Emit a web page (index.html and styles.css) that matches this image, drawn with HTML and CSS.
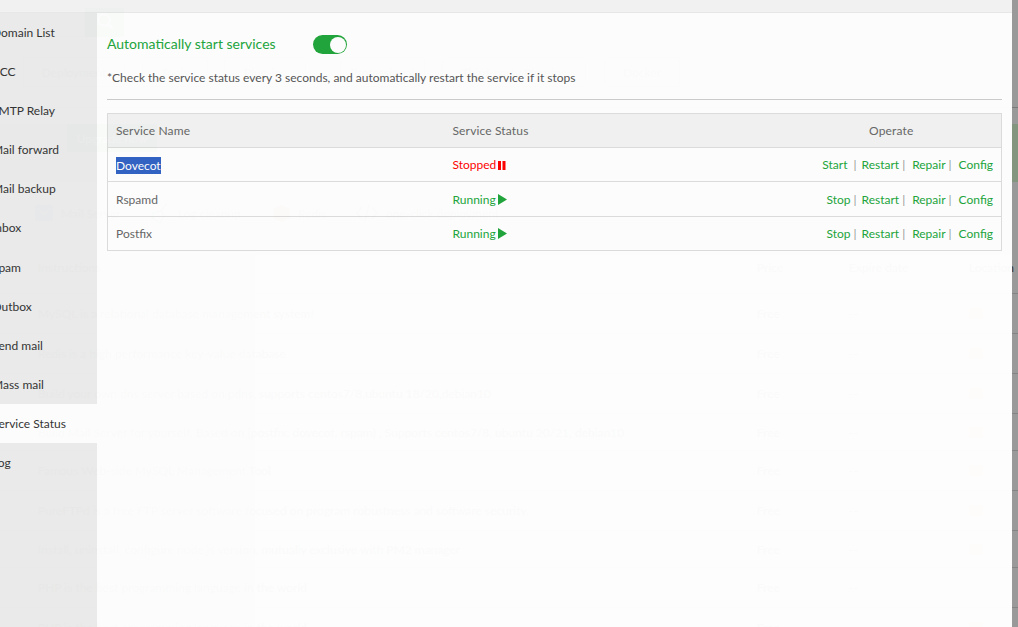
FILE: index.html
```html
<!DOCTYPE html>
<html lang="en">
<head>
<meta charset="utf-8">
<title>Service Status</title>
<link rel="stylesheet" href="styles.css">
</head>
<body>
<div class="page">
  <div class="search">
    <div class="search-box"></div>
    <div class="search-btn">
      <svg width="18" height="18" viewBox="0 0 18 18" fill="none" stroke="#fff" stroke-width="1.6"><circle cx="8" cy="8" r="5.6"/><path d="M12 12l5 5"/></svg>
    </div>
  </div>
  <nav class="tabs">
    <span class="tab tab-deploy">Deployment</span>
    <span class="tab tab-tools">Tools</span>
    <span class="tab tab-plug">Plug-ins</span>
    <span class="tab tab-pro">Professional</span>
    <span class="tab tab-third">Third-party Plug-ins</span>
    <span class="tab tab-docker">Docker</span>
  </nav>
  <div class="banner"><span class="upgrade">Upgrade now</span></div>
  <div class="quick">
    <span class="quick-item q-mail">
      <svg width="18" height="16" viewBox="0 0 18 16"><rect width="18" height="16" rx="2" fill="#3b8fe0"/><path d="M2 3l7 6 7-6" fill="none" stroke="#fff" stroke-width="1.4"/></svg>
      Mail Server
    </span>
    <span class="quick-item q-log">
      <svg width="20" height="22" viewBox="0 0 20 22" fill="none" stroke="#20a53a" stroke-width="1.6"><path d="M17 1l-6 8M3 11l8-2 3 5-4 7-8-5z"/></svg>
      Log cleanup
    </span>
    <span class="quick-item q-redis">
      <svg width="17" height="17" viewBox="0 0 17 17"><path d="M8.500 0l8 3.500v10l-8 3.500-8-3.500v-10z" fill="#d8382c"/></svg>
      Redis
    </span>
    <span class="quick-item q-code">
      <svg width="22" height="18" viewBox="0 0 22 18" fill="none" stroke="#555" stroke-width="1.5"><path d="M6 3L1 9l5 6M16 3l5 6-5 6M13 1L9 17"/></svg>
      one-click deployment
    </span>
  </div>
  <div class="soft-head">
    <span>Instructions</span><span>Price</span><span>Expire date</span><span>Location</span>
  </div>
  <div class="soft-row"><span>MySQL is a relational database management system!</span><span>Free</span><span>--</span><i class="folder"></i></div>
  <div class="soft-row"><span>Redis is a high performance key-value database</span><span>Free</span><span>--</span><i class="folder"></i></div>
  <div class="soft-row"><span>Build your own dns server based on pdns, supports centos7/8,ubuntu 18/20,debian10</span><span>Free</span><span>--</span><i class="folder"></i></div>
  <div class="soft-row soft-row-short"><span>Build Mail Server for yourself, Based on [postfix, dovecot, rspam] , Supports centos7/8, ubuntu 20/21, debian10</span><span>Free</span><span>--</span><i class="folder"></i></div>
  <div class="soft-row"><span>Famous Web-side MySQL Management Tool</span><span>Free</span><span>--</span><i class="folder"></i></div>
  <div class="soft-row"><span>PureFTPd is a free FTP server software focused on program robustness and software security.</span><span>Free</span><span>--</span><i class="folder"></i></div>
  <div class="soft-row soft-row-short"><span>Install, uninstall, configure node.js version, mutually exclusive with PM2 manager</span><span>Free</span><span>--</span><i class="folder"></i></div>
  <div class="soft-row"><span>PHP is the best programming language in the world</span><span>Free</span><span>--</span><i></i></div>
  <div class="soft-row"><span>PHP is the best programming language in the world</span><span>Free</span><span>--</span><i class="folder"></i></div>
</div>

<div class="shade"></div>

<section class="modal">
  <div class="modal-title"></div>
  <div class="modal-body">
    <ul class="side">
      <li>Domain List</li>
      <li>BCC</li>
      <li>SMTP Relay</li>
      <li>Mail forward</li>
      <li>Mail backup</li>
      <li>Inbox</li>
      <li>Spam</li>
      <li>Outbox</li>
      <li>Send mail</li>
      <li>Mass mail</li>
      <li class="active">Service Status</li>
      <li>Log</li>
    </ul>
    <main class="main">
      <div class="auto">
        <span class="auto-label">Automatically start services</span>
        <span class="toggle"><span class="knob"></span></span>
      </div>
      <p class="note">*Check the service status every 3 seconds, and automatically restart the service if it stops</p>
      <hr class="rule">
      <table class="services">
        <thead>
          <tr><th class="c-name">Service Name</th><th class="c-status">Service Status</th><th class="c-op">Operate</th></tr>
        </thead>
        <tbody>
          <tr class="r1">
            <td><span class="selected">Dovecot</span></td>
            <td class="stopped">Stopped<svg class="st-icon" width="8" height="9" viewBox="0 0 8 9"><path d="M0 0h3v9H0zM4.500 0h3v9h-3z" fill="#f00"/></svg></td>
            <td class="ops"><a>Start</a><span class="sep sep-first sep-wide">|</span><a>Restart</a><span class="sep">|</span><a>Repair</a><span class="sep">|</span><a>Config</a></td>
          </tr>
          <tr class="r2">
            <td>Rspamd</td>
            <td class="running">Running<svg class="st-icon" width="9" height="11" viewBox="0 0 9 11"><path d="M0 0l9 5.500L0 11z" fill="#20a53a"/></svg></td>
            <td class="ops"><a>Stop</a><span class="sep sep-first">|</span><a>Restart</a><span class="sep">|</span><a>Repair</a><span class="sep">|</span><a>Config</a></td>
          </tr>
          <tr class="r3">
            <td>Postfix</td>
            <td class="running">Running<svg class="st-icon" width="9" height="11" viewBox="0 0 9 11"><path d="M0 0l9 5.500L0 11z" fill="#20a53a"/></svg></td>
            <td class="ops"><a>Stop</a><span class="sep sep-first">|</span><a>Restart</a><span class="sep">|</span><a>Repair</a><span class="sep">|</span><a>Config</a></td>
          </tr>
        </tbody>
      </table>
    </main>
  </div>
</section>
</body>
</html>
```

FILE: styles.css
```css
* { box-sizing: border-box; }
html, body { margin: 0; height: 100%; }
body {
  position: relative;
  width: 1018px;
  height: 627px;
  overflow: hidden;
  background: #fff;
  font-family: Lato, "Noto Sans", sans-serif;
  font-size: 12px;
  color: #555;
}

/* page behind the dialog */
.page { height: 627px; overflow: hidden; padding-top: 8px; }
.search { display: flex; height: 29px; }
.search-box { width: 85px; border: 1px solid #ccc; border-left: 0; }
.search-btn { width: 39px; background: #20a53a; display: flex; align-items: center; justify-content: center; padding: 0 0 4px 0; }
.tabs { display: flex; height: 30px; margin: 20px 0 0 23px; }
.tab { display: flex; align-items: center; justify-content: center; border: 1px solid #ccc; border-radius: 2px; }
.tab-deploy { width: 102px; }
.tab-tools { width: 66px; margin-left: 17px; }
.tab-plug { width: 82px; margin-left: 16px; }
.tab-pro { width: 85px; margin-left: 34px; }
.tab-third { width: 144px; margin-left: 17px; }
.tab-docker { width: 76px; margin-left: 18px; }
.banner { height: 75px; margin-top: 20px; padding: 16px 0 0 67px; background: linear-gradient(#fff 0, #fff 16px, #daf7d4 16px, #daf7d4 75px); border-top: 1px solid #ccc; }
.upgrade { display: flex; width: 90px; height: 28px; align-items: center; justify-content: center; background: #20a53a; color: #fff; }
.quick { display: flex; height: 40px; align-items: center; margin-top: 11px; }
.quick-item { display: flex; align-items: center; gap: 8px; }
.q-mail { margin-left: 35px; width: 115px; }
.q-log { width: 123px; }
.q-redis { width: 83px; }
.soft-head, .soft-row {
  display: grid;
  grid-template-columns: 719px 92px 120px 60px;
  padding-left: 38px;
  align-items: center;
  white-space: nowrap;
  border-bottom: 1px solid #ddd;
  height: 40px;
  width: 1100px;
}
.soft-head { height: 41px; margin-top: 20px; padding-bottom: 12px; }
.soft-row-short { height: 37px; }
.folder { display: block; width: 14px; height: 11px; background: #f5b942; }

/* modal */
.shade { position: absolute; inset: 0; background: rgba(0, 0, 0, .4); }
.modal {
  position: absolute;
  top: 0;
  bottom: 0;
  left: -13px;
  width: 1025px;
  display: flex;
  flex-direction: column;
  background: #fff;
  opacity: .975;
}
.modal-title { height: 13px; flex: none; background: #f4f4f4; border-bottom: 1px solid #e9e9e9; }
.modal-body { flex: 1; display: flex; min-height: 0; }
.side { flex: none; width: 110px; margin: 0; padding: 0; list-style: none; background: #ececec; color: #333; }
.side li { height: 39.1px; line-height: 40px; padding-left: 5px; white-space: nowrap; }
.side li.active { background: #fff; }
.main { flex: 1; padding: 18px 10px 0; }
.auto { display: flex; align-items: center; height: 26px; }
.auto-label { color: #20a53a; font-size: 14px; line-height: 28px; width: 206px; }
.toggle { display: flex; justify-content: flex-end; width: 34px; height: 19px; padding: 1.500px; border-radius: 10px; background: #20a53a; margin-top: 1px; }
.knob { width: 16px; height: 16px; border-radius: 50%; background: #fff; }
.note { margin: 9px 0 0; line-height: 24px; color: #555; }
.rule { margin: 9px 0 13px; border: 0; border-top: 1px solid #ccc; }
.services { width: 100%; border-collapse: collapse; table-layout: fixed; color: #666; }
.services th, .services td { border-top: 1px solid #ddd; border-bottom: 1px solid #ddd; padding: 0 8px; line-height: 20px; text-align: left; font-weight: 400; }
.services td { padding-top: 1px; }
.services th { letter-spacing: .15px; }
.services tr > :first-child { border-left: 1px solid #ddd; }
.services tr > :last-child { border-right: 1px solid #ddd; }
.services thead tr { height: 34px; background: #f3f3f3; }
.services tbody tr { height: 34px; }
.services .r2 { height: 35px; }
.c-name { width: 337px; }
.c-status { width: 337px; }
.services .c-op { text-align: center; }
.selected { display: inline-block; background: #3162c4; color: #fff; height: 17px; line-height: 17px; vertical-align: middle; }
.services .stopped { color: #f00; }
.services .running { color: #20a53a; }
.st-icon { margin-left: 2px; vertical-align: -1px; }
.services .ops { text-align: right; white-space: nowrap; }
.ops a { color: #20a53a; }
.sep { color: #999; margin: 0 7px 0 3px; }
.sep-first { margin-right: 5px; }
.sep-wide { margin-left: 6px; }
```
